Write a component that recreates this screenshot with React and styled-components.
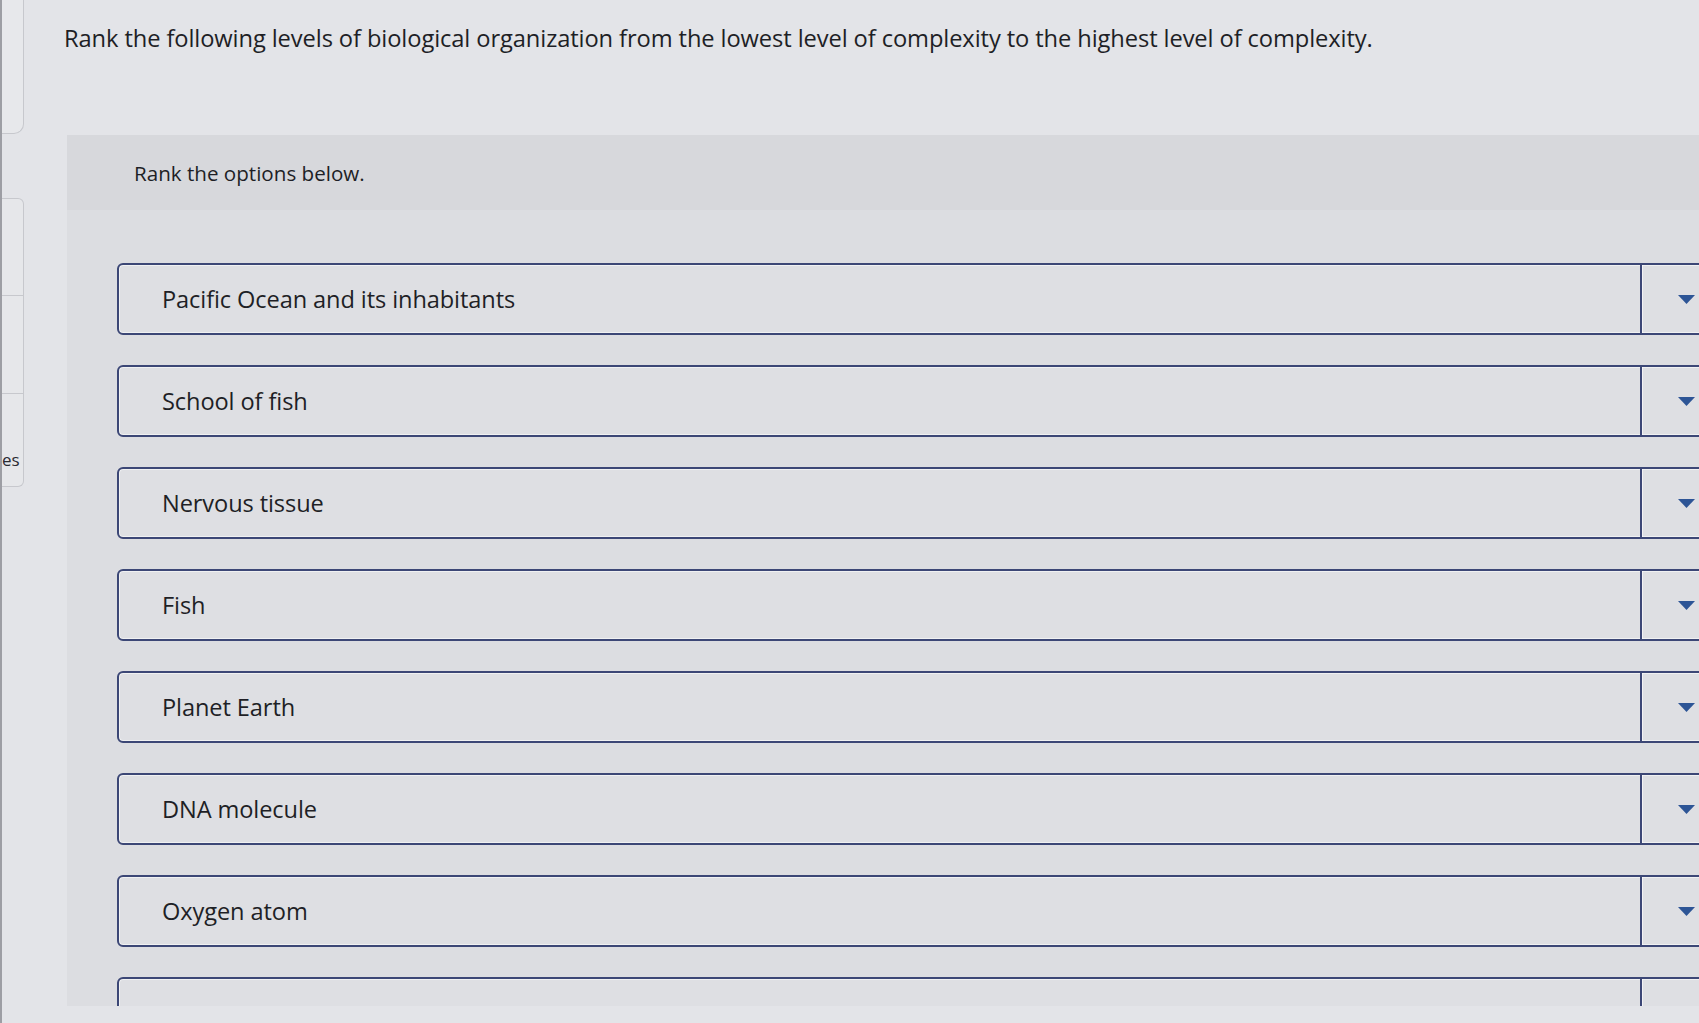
import React from "react";
import styled, { createGlobalStyle } from "styled-components";

const GlobalStyle = createGlobalStyle`
  html, body {
    margin: 0;
    padding: 0;
    overflow: hidden;
    background: #e3e4e8;
  }

  body {
    font-family: "Open Sans", "Liberation Sans", sans-serif;
    color: #1e1f26;
  }
`;

const Page = styled.div`
  display: flex;
  height: 1023px;
  overflow: hidden;
`;

const Sidebar = styled.aside`
  width: 24px;
  flex-shrink: 0;
  display: flex;
  flex-direction: column;
  overflow: hidden;
  border-left: 2px solid #9d9ea4;
  box-sizing: border-box;
`;

const TopCard = styled.div`
  height: 133px;
  background: #e7e8eb;
  border-right: 1px solid #c7c8cd;
  border-bottom: 1px solid #c7c8cd;
  border-bottom-right-radius: 10px;
`;

const NavList = styled.div`
  margin-top: 64px;
  display: flex;
  flex-direction: column;
  background: #e6e7ea;
  border: 1px solid #c7c8cd;
  border-left: none;
  border-radius: 0 6px 6px 0;
`;

const NavCell = styled.div`
  height: ${(p) => p.$h}px;
  display: flex;
  align-items: flex-end;
  padding-bottom: 15px;
  box-sizing: border-box;
  font-size: 17px;
  color: #2a2b31;
  white-space: nowrap;

  & + & {
    border-top: 1px solid #c7c8cd;
  }
`;

const Main = styled.main`
  flex: 1;
  display: flex;
  flex-direction: column;
  min-width: 0;
`;

const Question = styled.h1`
  margin: 22px 0 0 40px;
  font-size: 23.7px;
  font-weight: 400;
  line-height: 32px;
  letter-spacing: -0.1px;
  white-space: nowrap;
`;

const Panel = styled.section`
  margin: 81px 0 0 43px;
  height: 871px;
  overflow: hidden;
  background: #dcdde1;
  display: flex;
  flex-direction: column;
`;

const PanelHeader = styled.div`
  height: 75px;
  flex-shrink: 0;
  display: flex;
  align-items: center;
  padding-left: 67px;
  background: #d7d8dc;
  font-size: 20.6px;
`;

const OptionList = styled.div`
  display: flex;
  flex-direction: column;
  gap: 30px;
  padding: 53px 0 0 50px;
  margin-right: -20px;
`;

const Option = styled.div`
  height: 72px;
  flex-shrink: 0;
  box-sizing: border-box;
  display: grid;
  grid-template-columns: 1fr 77px;
  border: 2px solid #3c4776;
  border-radius: 6px;
  background: #dedfe3;
  box-shadow: inset 0 0 0 1px rgba(255, 255, 255, 0.55);
`;

const Label = styled.div`
  display: flex;
  align-items: center;
  padding-left: 43px;
  font-size: 23.6px;
  letter-spacing: -0.1px;
`;

const Toggle = styled.div`
  display: flex;
  align-items: center;
  padding-left: 36px;
  border-left: 2px solid #3c4776;
  box-shadow: inset 1px 0 0 rgba(255, 255, 255, 0.6);
`;

const Caret = () => (
  <svg width="17" height="9" viewBox="0 0 17 9">
    <polygon points="0,0 17,0 8.5,9" fill="#2d5596" />
  </svg>
);

const options = [
  "Pacific Ocean and its inhabitants",
  "School of fish",
  "Nervous tissue",
  "Fish",
  "Planet Earth",
  "DNA molecule",
  "Oxygen atom",
  "",
];

const App = () => {
  return (
    <>
      <GlobalStyle />
      <Page>
        <Sidebar>
          <TopCard />
          <NavList>
            <NavCell $h={96} />
            <NavCell $h={98} />
            <NavCell $h={93}>es</NavCell>
          </NavList>
        </Sidebar>
        <Main>
          <Question>
            Rank the following levels of biological organization from the
            lowest level of complexity to the highest level of complexity.
          </Question>
          <Panel>
            <PanelHeader>Rank the options below.</PanelHeader>
            <OptionList>
              {options.map((text, i) => (
                <Option key={i}>
                  <Label>{text}</Label>
                  <Toggle>
                    <Caret />
                  </Toggle>
                </Option>
              ))}
            </OptionList>
          </Panel>
        </Main>
      </Page>
    </>
  );
};

export default App;
